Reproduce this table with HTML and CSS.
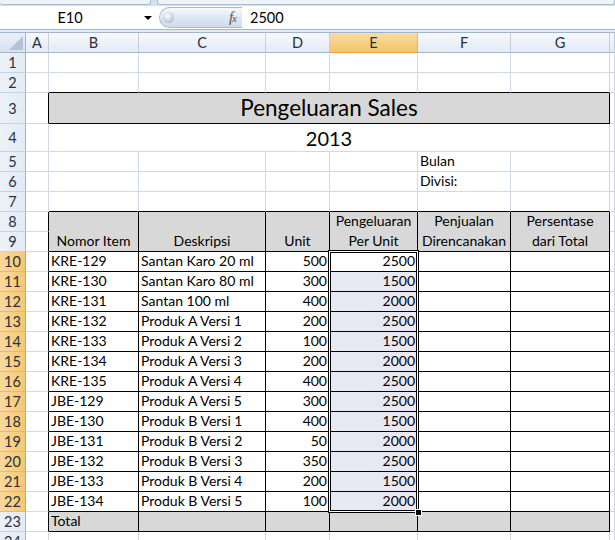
FILE: index.html
```html
<!DOCTYPE html>
<html>
<head>
<meta charset="utf-8">
<link rel="stylesheet" href="styles.css">
</head>
<body>
<div class="ribbon-edge"><div class="edge-box left"></div><div class="edge-box right"></div></div>
<div class="formula-bar">
  <div class="name-box"><span class="name">E10</span><span class="dd"></span></div>
  <div class="fx-pill"><span class="dot"></span><span class="fx">f<span class="fx-x">x</span></span></div>
  <div class="formula">2500</div>
</div>
<div class="gap"></div>
<div class="sheet">
  <div class="corner"><svg width="14" height="14" viewBox="0 0 14 14"><polygon points="14,0 14,14 0,14" fill="#b4c3d7"/></svg></div>
  <div class="ch">A</div><div class="ch">B</div><div class="ch">C</div><div class="ch">D</div><div class="ch hl">E</div><div class="ch">F</div><div class="ch">G</div><div class="ch"></div>

  <div class="rh">1</div><div class="c"></div><div class="c"></div><div class="c"></div><div class="c"></div><div class="c"></div><div class="c"></div><div class="c"></div><div class="c"></div>

  <div class="rh">2</div><div class="c"></div><div class="c bb"></div><div class="c bb"></div><div class="c bb"></div><div class="c bb"></div><div class="c bb"></div><div class="c bb"></div><div class="c"></div>

  <div class="rh">3</div><div class="c br"></div><div class="c box g title">Pengeluaran Sales</div><div class="c"></div>

  <div class="rh">4</div><div class="c"></div><div class="c year">2013</div><div class="c"></div>

  <div class="rh">5</div><div class="c"></div><div class="c"></div><div class="c"></div><div class="c"></div><div class="c"></div><div class="c">Bulan</div><div class="c"></div><div class="c"></div>

  <div class="rh">6</div><div class="c"></div><div class="c"></div><div class="c"></div><div class="c"></div><div class="c"></div><div class="c">Divisi:</div><div class="c"></div><div class="c"></div>

  <div class="rh">7</div><div class="c"></div><div class="c bb"></div><div class="c bb"></div><div class="c bb"></div><div class="c bb"></div><div class="c bb"></div><div class="c bb"></div><div class="c"></div>

  <div class="rh">8</div><div class="c br"></div>
  <div class="c box g hd">Nomor Item</div><div class="c box g hd">Deskripsi</div><div class="c box g hd">Unit</div><div class="c box g hd">Pengeluaran<br>Per Unit</div><div class="c box g hd">Penjualan<br>Direncanakan</div><div class="c box g hd">Persentase<br>dari Total</div>
  <div class="c"></div>
  <div class="rh">9</div><div class="c br"></div><div class="c"></div>

  <div class="rh hl">10</div><div class="c br"></div><div class="c box">KRE-129</div><div class="c box">Santan Karo 20 ml</div><div class="c box r">500</div><div class="c box r active">2500<div class="selection"><div class="handle"></div></div></div><div class="c box"></div><div class="c box"></div><div class="c"></div>
  <div class="rh hl">11</div><div class="c br"></div><div class="c box">KRE-130</div><div class="c box">Santan Karo 80 ml</div><div class="c box r">300</div><div class="c box r sel">1500</div><div class="c box"></div><div class="c box"></div><div class="c"></div>
  <div class="rh hl">12</div><div class="c br"></div><div class="c box">KRE-131</div><div class="c box">Santan 100 ml</div><div class="c box r">400</div><div class="c box r sel">2000</div><div class="c box"></div><div class="c box"></div><div class="c"></div>
  <div class="rh hl">13</div><div class="c br"></div><div class="c box">KRE-132</div><div class="c box">Produk A Versi 1</div><div class="c box r">200</div><div class="c box r sel">2500</div><div class="c box"></div><div class="c box"></div><div class="c"></div>
  <div class="rh hl">14</div><div class="c br"></div><div class="c box">KRE-133</div><div class="c box">Produk A Versi 2</div><div class="c box r">100</div><div class="c box r sel">1500</div><div class="c box"></div><div class="c box"></div><div class="c"></div>
  <div class="rh hl">15</div><div class="c br"></div><div class="c box">KRE-134</div><div class="c box">Produk A Versi 3</div><div class="c box r">200</div><div class="c box r sel">2000</div><div class="c box"></div><div class="c box"></div><div class="c"></div>
  <div class="rh hl">16</div><div class="c br"></div><div class="c box">KRE-135</div><div class="c box">Produk A Versi 4</div><div class="c box r">400</div><div class="c box r sel">2500</div><div class="c box"></div><div class="c box"></div><div class="c"></div>
  <div class="rh hl">17</div><div class="c br"></div><div class="c box">JBE-129</div><div class="c box">Produk A Versi 5</div><div class="c box r">300</div><div class="c box r sel">2500</div><div class="c box"></div><div class="c box"></div><div class="c"></div>
  <div class="rh hl">18</div><div class="c br"></div><div class="c box">JBE-130</div><div class="c box">Produk B Versi 1</div><div class="c box r">400</div><div class="c box r sel">1500</div><div class="c box"></div><div class="c box"></div><div class="c"></div>
  <div class="rh hl">19</div><div class="c br"></div><div class="c box">JBE-131</div><div class="c box">Produk B Versi 2</div><div class="c box r">50</div><div class="c box r sel">2000</div><div class="c box"></div><div class="c box"></div><div class="c"></div>
  <div class="rh hl">20</div><div class="c br"></div><div class="c box">JBE-132</div><div class="c box">Produk B Versi 3</div><div class="c box r">350</div><div class="c box r sel">2500</div><div class="c box"></div><div class="c box"></div><div class="c"></div>
  <div class="rh hl">21</div><div class="c br"></div><div class="c box">JBE-133</div><div class="c box">Produk B Versi 4</div><div class="c box r">200</div><div class="c box r sel">1500</div><div class="c box"></div><div class="c box"></div><div class="c"></div>
  <div class="rh hl">22</div><div class="c br"></div><div class="c box">JBE-134</div><div class="c box">Produk B Versi 5</div><div class="c box r">100</div><div class="c box r sel">2000</div><div class="c box"></div><div class="c box"></div><div class="c"></div>

  <div class="rh">23</div><div class="c br"></div><div class="c box g">Total</div><div class="c box g"></div><div class="c box g"></div><div class="c box g"></div><div class="c box g"></div><div class="c box g"></div><div class="c"></div>

  <div class="rh">24</div><div class="c"></div><div class="c"></div><div class="c"></div><div class="c"></div><div class="c"></div><div class="c"></div><div class="c"></div><div class="c"></div>
</div>
</body>
</html>
```
FILE: styles.css
```css
html, body {
  margin: 0;
  padding: 0;
}
body {
  width: 615px;
  height: 540px;
  overflow: hidden;
  background: #ffffff;
  font-family: Lato, "Liberation Sans", sans-serif;
  font-size: 14px;
  color: #000;
}
.ribbon-edge {
  height: 6px;
  background: #d3e0f0;
  display: flex;
  gap: 6px;
  box-sizing: border-box;
}
.edge-box {
  height: 4px;
  border: 1px solid #a9bdd6;
  border-top: none;
  border-radius: 0 0 3px 3px;
  background: #eef3fa;
}
.edge-box.left { width: 150px; border-left: none; }
.edge-box.right { flex: 1; }
.formula-bar {
  height: 23px;
  display: flex;
  align-items: center;
  background: #fff;
  border-bottom: 1px solid #a3b7d1;
}
.name-box {
  width: 155px;
  display: flex;
  align-items: center;
}
.name {
  width: 140px;
  text-align: center;
  font-size: 14.5px;
}
.dd {
  width: 0;
  height: 0;
  border-left: 4px solid transparent;
  border-right: 4px solid transparent;
  border-top: 4px solid #000;
  margin-left: 4px;
}
.fx-pill {
  width: 83px;
  height: 21px;
  margin-left: 4px;
  box-sizing: border-box;
  border: 1px solid #a6bcd6;
  border-right: none;
  border-radius: 11px 0 0 11px;
  background: linear-gradient(#f7f9fc, #dbe6f3 55%, #cfdcee);
  display: flex;
  align-items: center;
  justify-content: space-between;
  padding: 0 6px 0 3px;
}
.dot {
  width: 11px;
  height: 11px;
  border-radius: 50%;
  background: radial-gradient(circle at 40% 35%, #ffffff, #c4ccd6 60%, #9aa6b4);
}
.fx {
  font-family: "Liberation Serif", serif;
  font-style: italic;
  font-size: 15px;
  color: #555;
  letter-spacing: -1px;
}
.fx-x {
  font-size: 11px;
}
.formula {
  padding-left: 8px;
  font-size: 14.5px;
}
.gap {
  height: 2px;
  background: #e3eaf4;
}
.sheet {
  display: grid;
  grid-template-columns: 26px 23px 90px 127px 64px 88px 93px 99px 1fr;
  grid-template-rows: 21px 20px 20px 31px 28px repeat(20, 20px);
}
.sheet > div {
  box-sizing: border-box;
  min-width: 0;
}
.corner {
  border-top: 1px solid #9eb6ce;
  border-right: 1px solid #9eb6ce;
  border-bottom: 1px solid #9eb6ce;
  background: linear-gradient(#e9eff8, #d6e1ef);
  display: flex;
  align-items: flex-end;
  justify-content: flex-end;
  padding: 0 2px 2px 0;
}
.ch {
  border-top: 1px solid #9eb6ce;
  border-right: 1px solid #c0cfe0;
  border-bottom: 1px solid #9eb6ce;
  background: linear-gradient(#f6f8fc, #e4ebf5);
  display: flex;
  align-items: center;
  justify-content: center;
  font-size: 14.5px;
  color: #27313d;
}
.ch.hl {
  background: linear-gradient(#f9dca5, #f2c36a);
  border-bottom-color: #f29d3b;
  border-right-color: #e8b760;
}
.rh {
  border-right: 1px solid #9eb6ce;
  border-bottom: 1px solid #c5d3e4;
  background: linear-gradient(90deg, #edf2f9, #e2eaf5);
  display: flex;
  align-items: center;
  justify-content: center;
  font-size: 14.5px;
  color: #27313d;
}
.rh.hl {
  background: linear-gradient(90deg, #f9d99c, #f4c872);
  border-bottom-color: #e9b868;
  border-right-color: #f29d3b;
}
.c {
  border-right: 1px solid #d0d7e5;
  border-bottom: 1px solid #d0d7e5;
  display: flex;
  align-items: flex-end;
  padding: 0 2px 1px 2px;
  line-height: 18px;
  white-space: nowrap;
}
.box { border-right-color: #000; border-bottom-color: #000; }
.bb { border-bottom-color: #000; }
.br { border-right-color: #000; }
.g { background: #d8d8d8; }
.r { justify-content: flex-end; }
.sel { background: #e6e9f4; }
.title {
  grid-column: span 6;
  justify-content: center;
  font-size: 22.5px;
  line-height: 28px;
  padding-bottom: 1px;
}
.year {
  grid-column: span 6;
  justify-content: center;
  font-size: 20px;
  line-height: 26px;
  padding-bottom: 0;
}
.hd {
  grid-row: span 2;
  justify-content: center;
  text-align: center;
  white-space: nowrap;
  line-height: 20px;
  padding-bottom: 0;
}
.active {
  position: relative;
  background: #fff;
}
.selection {
  position: absolute;
  left: -2px;
  top: -2px;
  width: 91px;
  height: 263px;
  box-sizing: border-box;
  border: 1px solid #000;
  box-shadow: inset 0 0 0 1px #fff, inset 0 0 0 2px #000;
  z-index: 2;
  pointer-events: none;
}
.handle {
  position: absolute;
  right: -4px;
  bottom: -4px;
  width: 5px;
  height: 5px;
  background: #000;
  border: 1px solid #fff;
}
```
